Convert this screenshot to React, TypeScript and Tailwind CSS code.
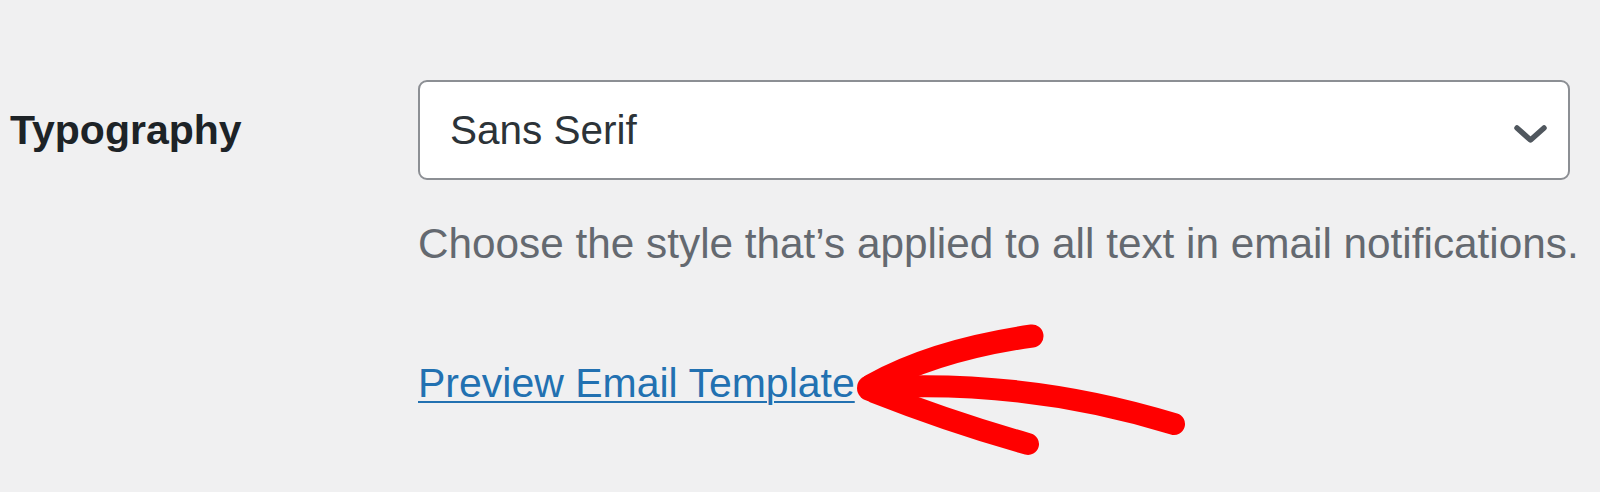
import React from "react";

export default function App() {
  return (
    <div
      className="relative w-[1600px] h-[492px] bg-[#f0f0f1] overflow-hidden"
      style={{ fontFamily: '"Liberation Sans", Arial, sans-serif' }}
    >
      <div className="flex pt-[80px] pl-[10px]">
        <div className="w-[408px] h-[100px] flex items-center">
          <span className="text-[41px] leading-[40px] font-bold text-[#1d2327]">Typography</span>
        </div>
        <div className="flex flex-col">
          <div className="w-[1152px] h-[100px] bg-white border-2 border-[#8c8f94] rounded-[9px] flex items-center justify-between pl-[30px] pr-[21px]">
            <span className="text-[40.5px] leading-[40px] text-[#2c3338]">Sans Serif</span>
            <svg width="33" height="18" viewBox="0 0 33 18" className="mt-[8px]">
              <path d="M3 3 L16.5 15 L30 3" fill="none" stroke="#50575e" strokeWidth="5.5" strokeLinecap="round" strokeLinejoin="round" />
            </svg>
          </div>
          <p className="mt-[43px] text-[42.3px] leading-[42px] text-[#646970] whitespace-nowrap">
            Choose the style that’s applied to all text in email notifications.
          </p>
          <div className="mt-[98px]">
            <a
              href="#"
              className="text-[41px] leading-[40px] text-[#2271b1] underline decoration-[2px] underline-offset-[4px] whitespace-nowrap"
            >
              Preview Email Template
            </a>
          </div>
        </div>
      </div>
      <svg className="absolute left-0 top-0 pointer-events-none" width="1600" height="492" viewBox="0 0 1600 492">
        <g fill="none" stroke="#ff0000" strokeLinecap="round" strokeLinejoin="round">
          <path d="M872 385 Q935 350 1032 336" strokeWidth="23" />
          <path d="M874 392 Q950 422 1028 444" strokeWidth="22" />
          <path d="M870 388 Q1024 378 1174 424" strokeWidth="22" />
          <circle cx="870" cy="388" r="13" fill="#ff0000" stroke="none" />
        </g>
      </svg>
    </div>
  );
}
